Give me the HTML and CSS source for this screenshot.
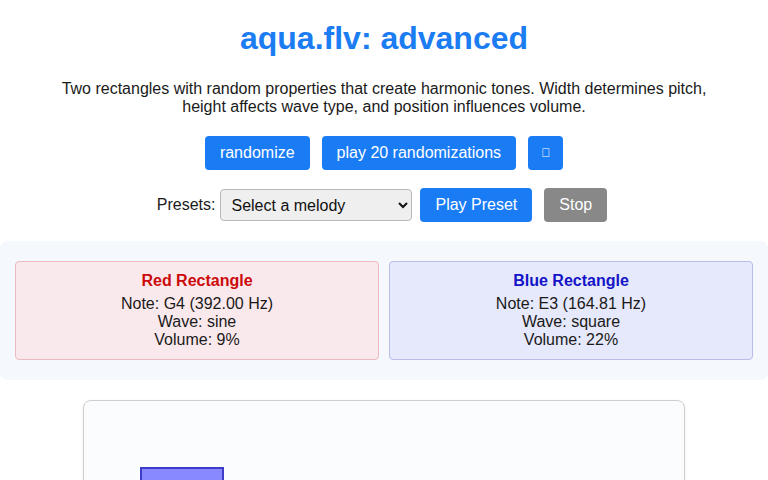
FILE: index.html
```html
<!DOCTYPE html>
<html lang="en">
<head>
<meta charset="utf-8">
<title>aqua.flv: advanced</title>
<link rel="stylesheet" href="styles.css">
</head>
<body>
<h1 class="title">aqua.flv: advanced</h1>
<p class="desc">Two rectangles with random properties that create harmonic tones. Width determines pitch, height affects wave type, and position influences volume.</p>
<div class="controls">
  <button class="btn">randomize</button>
  <button class="btn">play 20 randomizations</button>
  <button class="btn btn-icon">&#xE000;</button>
</div>
<div class="presets">
  <label class="presets-label">Presets:</label>
  <select class="select"><option>Select a melody</option></select>
  <button class="btn">Play Preset</button>
  <button class="btn btn-gray">Stop</button>
</div>
<div class="panel">
  <div class="card card-red">
    <div class="card-title red">Red Rectangle</div>
    <div>Note: G4 (392.00 Hz)</div>
    <div>Wave: sine</div>
    <div>Volume: 9%</div>
  </div>
  <div class="card card-blue">
    <div class="card-title blue">Blue Rectangle</div>
    <div>Note: E3 (164.81 Hz)</div>
    <div>Wave: square</div>
    <div>Volume: 22%</div>
  </div>
</div>
<div class="canvas">
  <div class="shape shape-blue"></div>
</div>
</body>
</html>
```
FILE: styles.css
```css
html, body {
  margin: 0;
  padding: 0;
  background: #ffffff;
}
body {
  font-family: "Liberation Sans", Arial, sans-serif;
  font-size: 16px;
  color: #1a1a1a;
}
.title {
  font-size: 32px;
  font-weight: bold;
  color: #1c7cf2;
  text-align: center;
  margin: 20px 0 23px;
  line-height: 37px;
}
.desc {
  max-width: 680px;
  margin: 0 auto 20px;
  text-align: center;
  line-height: 18px;
}
.controls {
  display: flex;
  justify-content: center;
  gap: 12px;
}
.btn {
  font-family: "Liberation Sans", Arial, sans-serif;
  font-size: 16px;
  line-height: 18px;
  color: #ffffff;
  background: #1a7cf5;
  border: none;
  border-radius: 4px;
  padding: 8px 15px;
  height: 34px;
  cursor: pointer;
}
.btn-icon {
  padding: 8px 13px;
  font-size: 12px;
}
.btn-gray {
  background: #888888;
}
.presets {
  display: flex;
  justify-content: center;
  align-items: center;
  margin-top: 18px;
  padding-right: 4px;
}
.presets-label {
  margin-right: 5px;
}
.select {
  font-family: "Liberation Sans", Arial, sans-serif;
  font-size: 16px;
  width: 192px;
  height: 32px;
  padding: 0 6px;
  background: #efefef;
  border: 1px solid #b9b9b9;
  border-radius: 4px;
  color: #111;
  margin-right: 8px;
}
.presets .btn + .btn {
  margin-left: 12px;
}
.panel {
  margin-top: 19px;
  background: #f5f9fd;
  border-radius: 8px;
  padding: 20px 15px;
  display: flex;
  gap: 10px;
}
.card {
  flex: 1;
  text-align: center;
  padding: 10px;
  border-radius: 4px;
  line-height: 18px;
}
.card-red {
  background: #fae9ec;
  border: 1px solid #ebbac1;
}
.card-blue {
  background: #e6e8fb;
  border: 1px solid #b9bde9;
}
.card-title {
  font-weight: bold;
  margin-bottom: 5px;
}
.red { color: #cc0a0a; }
.blue { color: #1414c8; }
.canvas {
  position: relative;
  width: 600px;
  height: 300px;
  margin: 20px auto 0;
  background: #fbfcfd;
  border: 1px solid #cfcfcf;
  border-radius: 8px;
  box-shadow: 0 1px 4px rgba(0,0,0,0.05);
}
.shape {
  position: absolute;
  box-sizing: border-box;
}
.shape-blue {
  left: 56px;
  top: 66px;
  width: 84px;
  height: 60px;
  background: #8888ff;
  border: 2px solid #3c3cc8;
}
```
